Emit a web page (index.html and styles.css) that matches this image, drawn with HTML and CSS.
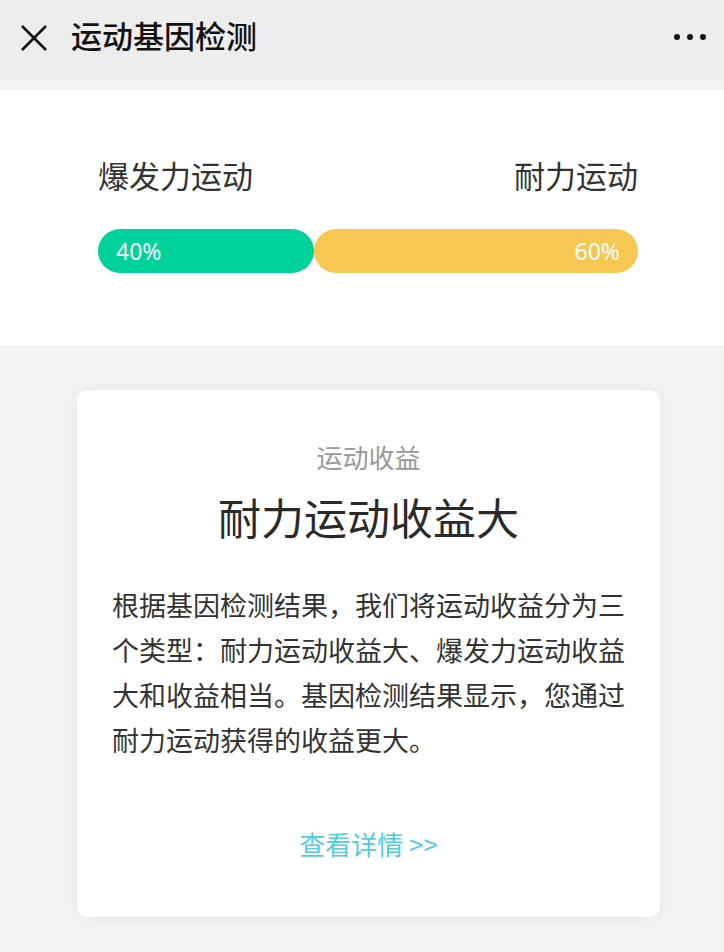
FILE: index.html
```html
<!DOCTYPE html>
<html>

<head>
	<meta charset="utf-8">
	<title>运动基因检测</title>
	<link rel="stylesheet" href="styles.css">
</head>

<body>
	<div class="topbar">
		<svg class="close" width="28" height="28" viewBox="0 0 28 28">
			<path d="M2 2 L26 26 M26 2 L2 26" stroke="#111" stroke-width="2.6" fill="none" />
		</svg>
		<h1>运动基因检测</h1>
		<div class="more">
			<span></span><span></span><span></span>
		</div>
	</div>

	<div class="ratio">
		<div class="labels">
			<span>爆发力运动</span>
			<span>耐力运动</span>
		</div>
		<div class="bar">
			<div class="part burst" style="width: 40%">40%</div>
			<div class="part endure" style="width: 60%">60%</div>
		</div>
	</div>

	<div class="card">
		<p class="sub">运动收益</p>
		<h2>耐力运动收益大</h2>
		<p class="desc">根据基因检测结果，我们将运动收益分为三个类型：耐力运动收益大、爆发力运动收益大和收益相当。基因检测结果显示，您通过耐力运动获得的收益更大。</p>
		<a class="more-link" href="#">查看详情 &gt;&gt;</a>
	</div>
</body>

</html>
```

FILE: styles.css
```css
body {
	background-color: #f3f3f3;
	color: #333;
	font-family: "Noto Sans CJK SC", "Noto Sans", sans-serif;
	margin: 0;
	padding: 0;
	padding-bottom: 36px;
}

.topbar {
	background-color: #ededed;
	height: 81px;
	box-sizing: border-box;
	display: flex;
	align-items: center;
	padding: 0 18px 5px 20px;
}

.topbar .close {
	flex: none;
}

.topbar h1 {
	font-size: 31px;
	font-weight: 500;
	color: #111;
	margin: -6px 0 0 23px;
	flex: 1;
	line-height: 40px;
}

.more {
	display: flex;
	gap: 7px;
	margin-top: -2px;
}

.more span {
	width: 6px;
	height: 6px;
	border-radius: 50%;
	background-color: #111;
}

.ratio {
	background-color: #fff;
	margin-top: 9px;
	padding: 65px 86px 72px 98px;
}

.labels {
	display: flex;
	justify-content: space-between;
	font-size: 31px;
	line-height: 40px;
	color: #333;
}

.bar {
	display: flex;
	margin-top: 34px;
	height: 44px;
}

.part {
	height: 44px;
	line-height: 44px;
	border-radius: 22px;
	color: #fff;
	font-family: "Noto Sans", sans-serif;
	font-size: 23px;
	box-sizing: border-box;
}

.burst {
	background-color: #00d29a;
	padding-left: 18px;
}

.endure {
	background-color: #f6c752;
	text-align: right;
	padding-right: 18px;
}

.card {
	background-color: #fff;
	margin: 45px 64px 0 77px;
	border-radius: 10px;
	box-shadow: 0 0 18px rgba(0, 0, 0, 0.06);
	padding: 49px 35px 55px 35px;
	text-align: center;
}

.card .sub {
	font-size: 26px;
	line-height: 36px;
	color: #999;
	margin: 0;
}

.card h2 {
	font-size: 43px;
	font-weight: 400;
	line-height: 56px;
	margin: 13px 0 0;
	color: #2a2a2a;
}

.card .desc {
	text-align: left;
	font-size: 27px;
	line-height: 45px;
	margin: 38px 0 0;
	color: #333;
}

.more-link {
	display: block;
	margin-top: 64px;
	font-size: 26px;
	line-height: 36px;
	color: #52cbe0;
	text-decoration: none;
}
```
